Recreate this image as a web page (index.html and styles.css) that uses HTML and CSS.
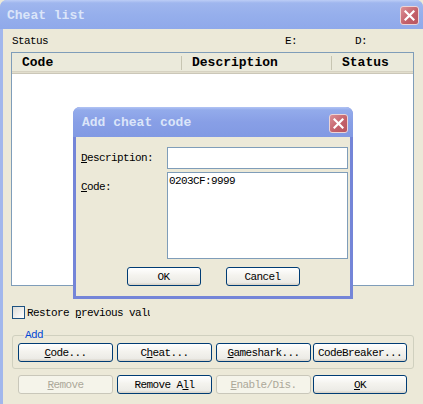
FILE: index.html
```html
<!DOCTYPE html>
<html lang="en">
<head>
  <meta charset="UTF-8" />
  <title>Cheat list</title>
  <link rel="stylesheet" href="styles.css">
</head>
<body>

  <div class="window">
    <div class="titlebar">
      <span class="title">Cheat list</span>
      <span class="close">
        <svg width="11" height="11" viewBox="0 0 11 11"><path d="M1.5 1.5 L9.5 9.5 M9.5 1.5 L1.5 9.5" stroke="#fff" stroke-width="2.2" stroke-linecap="square"/></svg>
      </span>
    </div>

    <div class="client">
      <div class="status-row">
        <span class="status-label">Status</span>
        <span class="stat-e">E:</span>
        <span>D:</span>
      </div>

      <div class="listview">
        <div class="lv-header">
          <div class="col col-code">Code</div>
          <div class="col col-desc">Description</div>
          <div class="col col-status">Status</div>
        </div>
      </div>

      <div class="check-row">
        <span class="checkbox"></span>
        <span class="check-text">Restore <u>p</u>revious values</span>
      </div>

      <fieldset class="group">
        <legend>Add</legend>
        <div class="btn-row">
          <button class="btn"><u>C</u>ode...</button>
          <button class="btn">C<u>h</u>eat...</button>
          <button class="btn"><u>G</u>ameshark...</button>
          <button class="btn btn-last">CodeBreaker...</button>
        </div>
      </fieldset>

      <div class="btn-row bottom-row">
        <button class="btn" disabled><u>R</u>emove</button>
        <button class="btn">Remove A<u>l</u>l</button>
        <button class="btn" disabled><u>E</u>nable/Dis.</button>
        <button class="btn btn-last"><u>O</u>K</button>
      </div>
    </div>

    <!-- modal dialog over the list -->
    <div class="dialog">
      <div class="titlebar dialog-titlebar">
        <span class="title">Add cheat code</span>
        <span class="close">
          <svg width="11" height="11" viewBox="0 0 11 11"><path d="M1.5 1.5 L9.5 9.5 M9.5 1.5 L1.5 9.5" stroke="#fff" stroke-width="2.2" stroke-linecap="square"/></svg>
        </span>
      </div>
      <div class="dialog-client">
        <div class="form">
          <label class="form-label"><u>D</u>escription:</label>
          <input type="text" class="field" />
          <label class="form-label label-top"><u>C</u>ode:</label>
          <textarea class="field code-area">0203CF:9999</textarea>
        </div>
        <div class="dialog-buttons">
          <button class="btn btn-small">OK</button>
          <button class="btn btn-small">Cancel</button>
        </div>
      </div>
    </div>
  </div>

</body>
</html>
```

FILE: styles.css
```css
body {
  margin: 0; width: 423px; height: 404px; overflow: hidden;
  background: #ece9d8;
  font-family: "Liberation Mono", "DejaVu Sans Mono", monospace;
  font-size: 11px; letter-spacing: -0.6px; color: #000;
}

.window {
  position: relative; display: flex; flex-direction: column;
  width: 423px; height: 404px;
  background: #a2b7ec; border-radius: 7px 7px 0 0;
}

.titlebar {
  display: flex; justify-content: space-between; align-items: center;
  height: 29px; flex-shrink: 0; padding: 0 4px 0 7px;
  background: linear-gradient(#bccdf6 0, #9fb6ee 3px, #96afec 50%, #8fa9ea 100%);
  border-radius: 7px 7px 0 0;
}
.title {
  font-weight: bold; font-size: 13px; letter-spacing: 0;
  color: #dbe5f9; padding-top: 1px;
}
.close {
  display: flex; align-items: center; justify-content: center;
  width: 17px; height: 17px; margin-top: 2px;
  border: 1px solid #ecd4d6; border-radius: 3px;
  background: linear-gradient(135deg, #dc9096, #c25f69 60%, #b85560);
}

.client {
  flex: 1; margin-left: 3px; padding-left: 8px;
  background: #ece9d8;
}

.status-row { display: flex; align-items: center; height: 23px; padding-left: 1px; }
.status-label { width: 273px; }
.stat-e { width: 70px; }

.listview {
  width: 401px; height: 232px;
  border: 1px solid #7f9db9; background: #fff;
}
.lv-header {
  display: flex; height: 18px;
  background: #ebeadb;
  border-bottom: 1px solid #d6d2c2;
  box-shadow: 0 1px 0 #e2decd, 0 2px 0 #cbc7b8;
  font-size: 13px; font-weight: bold; letter-spacing: 0;
}
.col {
  display: flex; align-items: center; padding-left: 10px;
  border-right: 1px solid #c7c5b2;
  margin: 3px 0 1px;
  line-height: 14px;
}
.col-code { width: 159px; }
.col-desc { width: 139px; }
.col-status { flex: 1; border-right: none; }

.check-row { display: flex; align-items: center; margin-top: 20px; padding-left: 1px; height: 13px; }
.checkbox {
  width: 11px; height: 11px; flex-shrink: 0;
  border: 1px solid #1c5180;
  background: linear-gradient(135deg, #dcdcd7, #fff);
}
.check-text { margin-left: 2px; width: 123px; overflow: hidden; white-space: nowrap; }

.group {
  margin: 10px 0 0 1px; padding: 1px 0 6px 5px; width: 395px;
  border: 1px solid #d0d0bf; border-radius: 3px;
}
.group legend { padding: 0 1px; margin-left: 6px; color: #0046d5; line-height: 13px; }

.btn-row { display: flex; gap: 4px; }
.bottom-row { margin: 6px 0 0 7px; }

.btn {
  width: 95px; height: 19px; padding: 0;
  font: inherit; letter-spacing: inherit; color: #000;
  border: 1px solid #003c74; border-radius: 3px;
  background: linear-gradient(#ffffff, #f4f3ee 45%, #ecebe6 85%, #d6d0c5);
}
.btn-last { width: 94px; margin-left: -2px; }
.btn:disabled {
  color: #aca899; border-color: #c9c7ba;
  background: #f5f4ea;
}
.btn-small { width: 74px; }

.dialog {
  position: absolute; left: 73px; top: 107px;
  width: 280px; height: 192px; box-sizing: border-box;
  display: flex; flex-direction: column;
  background: #7485d8; border-radius: 7px 7px 0 0;
}
.dialog-titlebar {
  height: 30px; padding: 0 5px 0 9px;
  background: linear-gradient(#b2c4f4 0, #93abeb 3px, #889fe6 50%, #8199e3 100%);
}
.dialog-client {
  flex: 1; margin: 0 3px 3px; padding: 10px 3px 0 5px;
  background: #ece9d8;
}

.form {
  display: grid; grid-template-columns: 86px 181px; row-gap: 3px;
}
.form-label { align-self: center; }
.label-top { align-self: start; padding-top: 9px; }
.field {
  box-sizing: border-box; margin: 0;
  border: 1px solid #7f9db9; background: #fff;
  font: inherit; letter-spacing: inherit; color: #000;
  outline: none;
}
input.field { height: 22px; }
.code-area { height: 87px; resize: none; padding: 2px 1px; line-height: 13px; overflow: hidden; }

.dialog-buttons { display: flex; justify-content: center; gap: 25px; margin-top: 8px; padding-right: 2px; }
```
